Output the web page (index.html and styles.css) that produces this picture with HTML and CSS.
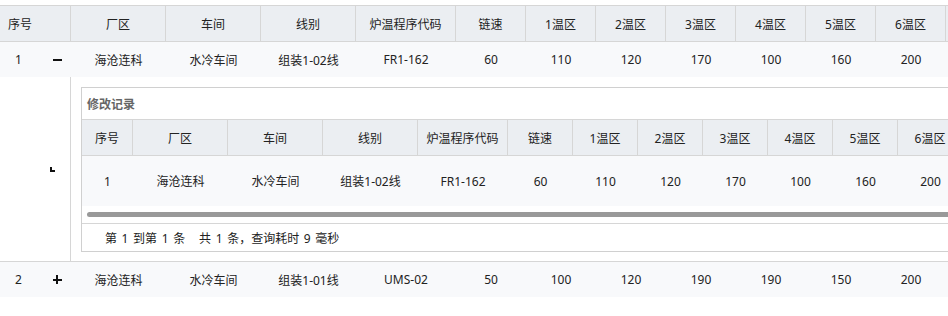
FILE: index.html
```html
<!DOCTYPE html>
<html lang="zh-CN">
<head>
<meta charset="utf-8">
<title>炉温程序</title>
<link rel="stylesheet" href="styles.css">
</head>
<body>
<div class="page">
  <div class="tbl">
    <div class="row head">
      <div class="hc c-first">序号</div>
      <div class="hc w95">厂区</div>
      <div class="hc w95">车间</div>
      <div class="hc w95">线别</div>
      <div class="hc w100">炉温程序代码</div>
      <div class="hc w70">链速</div>
      <div class="hc w70">1温区</div>
      <div class="hc w70">2温区</div>
      <div class="hc w70">3温区</div>
      <div class="hc w70">4温区</div>
      <div class="hc w70">5温区</div>
      <div class="hc w70">6温区</div>
      <div class="hc w70"></div>
      <div class="hc w70"></div>
    </div>
    <div class="row data">
      <div class="dc c-idx">1</div>
      <div class="dc c-toggle"><span class="minus"></span></div>
      <div class="dc w95">海沧连科</div>
      <div class="dc w95">水冷车间</div>
      <div class="dc w95">组装1-02线</div>
      <div class="dc w100">FR1-162</div>
      <div class="dc w70">60</div>
      <div class="dc w70">110</div>
      <div class="dc w70">120</div>
      <div class="dc w70">170</div>
      <div class="dc w70">100</div>
      <div class="dc w70">160</div>
      <div class="dc w70">200</div>
      <div class="dc w70"></div>
    </div>
    <div class="detail">
      <div class="detail-side"><span class="corner"></span></div>
      <div class="detail-main">
        <div class="panel">
          <div class="panel-title">修改记录</div>
          <div class="row ihead">
            <div class="ic i51">序号</div>
            <div class="ic i95">厂区</div>
            <div class="ic i95">车间</div>
            <div class="ic i95">线别</div>
            <div class="ic i90">炉温程序代码</div>
            <div class="ic i65">链速</div>
            <div class="ic i65">1温区</div>
            <div class="ic i65">2温区</div>
            <div class="ic i65">3温区</div>
            <div class="ic i65">4温区</div>
            <div class="ic i65">5温区</div>
            <div class="ic i65">6温区</div>
            <div class="ic i65"></div>
          </div>
          <div class="row idata">
            <div class="idc i51">1</div>
            <div class="idc i95">海沧连科</div>
            <div class="idc i95">水冷车间</div>
            <div class="idc i95">组装1-02线</div>
            <div class="idc i90">FR1-162</div>
            <div class="idc i65">60</div>
            <div class="idc i65">110</div>
            <div class="idc i65">120</div>
            <div class="idc i65">170</div>
            <div class="idc i65">100</div>
            <div class="idc i65">160</div>
            <div class="idc i65">200</div>
            <div class="idc i65"></div>
          </div>
          <div class="scroll-track"><div class="scroll-thumb"></div></div>
          <div class="panel-foot">第 1 到第 1 条&nbsp;&nbsp;&nbsp;共 1 条，查询耗时 9 毫秒</div>
        </div>
      </div>
    </div>
    <div class="row data">
      <div class="dc c-idx">2</div>
      <div class="dc c-toggle"><span class="plus"></span></div>
      <div class="dc w95">海沧连科</div>
      <div class="dc w95">水冷车间</div>
      <div class="dc w95">组装1-01线</div>
      <div class="dc w100">UMS-02</div>
      <div class="dc w70">50</div>
      <div class="dc w70">100</div>
      <div class="dc w70">120</div>
      <div class="dc w70">190</div>
      <div class="dc w70">190</div>
      <div class="dc w70">150</div>
      <div class="dc w70">200</div>
      <div class="dc w70"></div>
    </div>
  </div>
</div>
</body>
</html>
```
FILE: styles.css
```css
* { box-sizing: border-box; }
html, body { margin: 0; padding: 0; background: #fff; }
body {
  font-family: "Noto Sans", "Noto Sans CJK SC", sans-serif;
  font-size: 12px;
  color: #222;
  overflow: hidden;
  width: 948px;
  height: 316px;
}
.page { padding-top: 5px; width: 1400px; }
.tbl { width: 1200px; }
.row { display: flex; }
.head {
  height: 37px;
  background: #ebeef2;
  border-top: 1px solid #d6d6d6;
  border-bottom: 1px solid #d6d6d6;
}
.hc {
  flex: none;
  display: flex;
  align-items: center;
  justify-content: center;
  border-right: 1px solid #d6d6d6;
}
.c-first { width: 71px; justify-content: flex-start; padding-left: 8px; }
.w95 { width: 95px; }
.w100 { width: 100px; }
.w70 { width: 70px; }
.data {
  height: 35px;
  background: #f8f9fb;
}
.dc {
  flex: none;
  display: flex;
  align-items: center;
  justify-content: center;
}
.c-idx { width: 37px; }
.c-toggle { width: 34px; padding-left: 6px; }
.minus { display: block; width: 9px; height: 2px; background: #111; }
.plus { display: block; width: 9px; height: 9px; position: relative; }
.plus::before, .plus::after { content: ""; position: absolute; background: #111; }
.plus::before { left: 0; top: 3.5px; width: 9px; height: 2px; }
.plus::after { left: 3.5px; top: 0; width: 2px; height: 9px; }
.detail {
  display: flex;
  height: 185px;
  border-bottom: 1px solid #d6d6d6;
  background: #fff;
}
.detail-side {
  flex: none;
  width: 71px;
  border-right: 1px solid #d6d6d6;
  display: flex;
  align-items: center;
  padding-left: 50px;
}
.corner {
  display: block;
  width: 5px;
  height: 5px;
  border-left: 2px solid #111;
  border-bottom: 2px solid #111;
}
.detail-main { flex: 1; padding: 10px 0 9px 10px; }
.panel {
  border: 1px solid #d0d0d0;
  border-right: none;
  background: #fff;
}
.panel-title {
  height: 31px;
  display: flex;
  align-items: center;
  padding-left: 5px;
  color: #666;
  font-weight: 600;
}
.ihead {
  height: 37px;
  background: #ebeef2;
  border-top: 1px solid #d6d6d6;
  border-bottom: 1px solid #d6d6d6;
}
.ic {
  flex: none;
  display: flex;
  align-items: center;
  justify-content: center;
  border-right: 1px solid #d6d6d6;
}
.i51 { width: 51px; }
.i95 { width: 95px; }
.i90 { width: 90px; }
.i65 { width: 65px; }
.idata { height: 50px; background: #f8f9fb; }
.idc {
  flex: none;
  display: flex;
  align-items: center;
  justify-content: center;
}
.scroll-track { height: 17px; padding: 6px 0 0 5px; }
.scroll-thumb { height: 5px; background: #999; border-radius: 3px 0 0 3px; }
.panel-foot {
  height: 28px;
  border-top: 1px solid #d6d6d6;
  display: flex;
  align-items: center;
  padding-left: 23px;
  color: #222;
  word-spacing: 1.5px;
  white-space: pre;
}
```
